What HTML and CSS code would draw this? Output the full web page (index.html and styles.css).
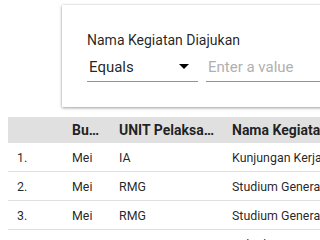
FILE: index.html
```html
<!DOCTYPE html>
<html>
<head>
<meta charset="utf-8">
<link rel="stylesheet" href="styles.css">
</head>
<body>
<div class="filter-panel">
  <div class="filter-label">Nama Kegiatan Diajukan</div>
  <div class="filter-row">
    <div class="select">
      <span>Equals</span>
      <svg class="arrow" width="10" height="5" viewBox="0 0 10 5"><path d="M0 0h10L5 5z" fill="#000"/></svg>
    </div>
    <div class="input">Enter a value</div>
  </div>
</div>
<table class="grid">
  <colgroup>
    <col class="c1"><col class="c2"><col class="c3"><col class="c4">
  </colgroup>
  <thead>
    <tr><th></th><th class="narrow">Bulan</th><th>UNIT Pelaksana</th><th>Nama Kegiatan Diajukan</th></tr>
  </thead>
  <tbody>
    <tr><td>1.</td><td>Mei</td><td>IA</td><td>Kunjungan Kerja ke Mitra</td></tr>
    <tr><td>2.</td><td>Mei</td><td>RMG</td><td>Studium Generale</td></tr>
    <tr><td>3.</td><td>Mei</td><td>RMG</td><td>Studium Generale</td></tr>
    <tr><td>4.</td><td>Mei</td><td>RMG</td><td>Pelatihan Kepemimpinan</td></tr>
  </tbody>
</table>
</body>
</html>
```
FILE: styles.css
```css
html, body {
  margin: 0;
  padding: 0;
  background: #fff;
  overflow: hidden;
  font-family: Roboto, "Noto Sans", Arial, sans-serif;
  color: rgba(0,0,0,0.87);
}
body {
  padding: 117px 0 0 8px;
  width: 320px;
  height: 240px;
  box-sizing: border-box;
  position: relative;
}
.filter-panel {
  position: absolute;
  left: 62px;
  top: 5px;
  width: 300px;
  height: 102px;
  background: #fff;
  box-shadow: 0 1px 3px rgba(0,0,0,0.35), 0 0 2px rgba(0,0,0,0.12);
  padding: 26px 0 0 25px;
  box-sizing: border-box;
  z-index: 2;
}
.filter-label {
  font-size: 14px;
  line-height: 18px;
  color: rgba(0,0,0,0.87);
}
.filter-row {
  display: flex;
  gap: 8px;
  margin-top: 7px;
}
.select {
  width: 111px;
  height: 26px;
  box-sizing: border-box;
  border-bottom: 1px solid rgba(0,0,0,0.42);
  display: flex;
  align-items: center;
  justify-content: space-between;
  padding: 0 9px 4px 2px;
  font-size: 15px;
  color: rgba(0,0,0,0.87);
}
.arrow { display: block; }
.input {
  flex: 1;
  height: 26px;
  box-sizing: border-box;
  border-bottom: 1px solid rgba(0,0,0,0.42);
  padding: 0 0 4px 2px;
  display: flex;
  align-items: center;
  font-size: 15px;
  color: #b0b0b0;
}
.grid {
  border-collapse: collapse;
  table-layout: fixed;
  width: 400px;
  font-size: 12.4px;
}
.c1 { width: 55px; }
.c2 { width: 47px; }
.c3 { width: 113px; }
.c4 { width: 185px; }
.grid th {
  background: #e0e0e0;
  height: 26px;
  padding: 0 5px 0 9px;
  text-align: left;
  font-weight: 700;
  font-size: 14px;
  white-space: nowrap;
  overflow: hidden;
  text-overflow: ellipsis;
  color: rgba(0,0,0,0.87);
}
.grid th.narrow {
  padding-right: 9px;
}
.grid td {
  height: 28px;
  padding: 0 9px;
  border-bottom: 1px solid #e0e0e0;
  white-space: nowrap;
  overflow: hidden;
  color: rgba(0,0,0,0.87);
}
```
